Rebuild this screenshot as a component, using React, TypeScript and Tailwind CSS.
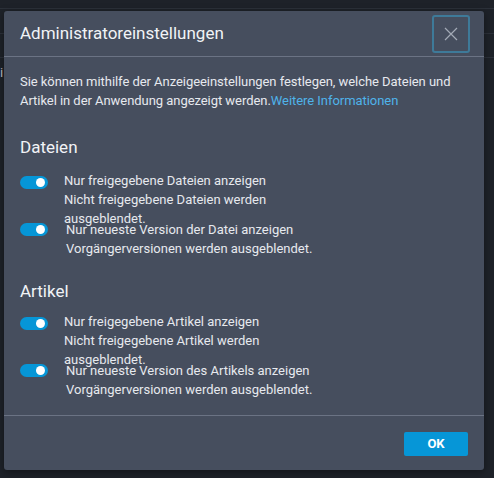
import React from 'react';

const font = { fontFamily: 'Roboto, "Liberation Sans", sans-serif' };

function Toggle() {
  return (
    <span className="relative mt-[5px] inline-flex h-[13px] w-[28px] shrink-0 items-center rounded-full bg-[#0696d7]">
      <span className="absolute right-[3px] h-[9px] w-[9px] rounded-full bg-white" />
    </span>
  );
}

function OptionRow({ label, hint, shift }: { label: string; hint: string; shift?: boolean }) {
  return (
    <div className="flex h-[47px] items-start gap-[16px]">
      <Toggle />
      <div className={`w-[252px] text-[13px] leading-[19px] text-[#e6e9ee] ${shift ? 'ml-[2px] mt-[2px]' : ''}`}>
        <div className="whitespace-nowrap">{label}</div>
        <div>{hint}</div>
      </div>
    </div>
  );
}

export default function App() {
  return (
    <div className="relative h-[478px] w-[494px] overflow-hidden bg-[#1e2229]" style={font}>
      {/* page behind the modal */}
      <div className="flex flex-col">
        <div className="h-[9px] border-b border-[#2c313a] text-[13px] leading-[4px] text-[#b8bec8]">
          <span className="relative left-[-12px] top-[-6px]">Filter Files</span>
        </div>
        <div className="h-[25px] border-b border-[#2c313a]" />
        <div className="h-[24px] border-b border-[#2c313a]" />
        <div className="h-[24px] text-[13px] leading-[30px] text-[#b8bec8]">i</div>
      </div>

      {/* modal */}
      <div className="absolute left-[4px] top-[11px] flex h-[459px] w-[480px] flex-col rounded-[3px] bg-[#464e5e] shadow-[0_2px_8px_rgba(0,0,0,0.4)]">
        <div className="flex h-[46px] shrink-0 items-center justify-between border-b border-[#6b7384] pl-[16px] pr-[14px]">
          <h1 className="text-[17px] text-[#f1f3f6]">Administratoreinstellungen</h1>
          <button className="mt-[4px] flex h-[38px] w-[38px] items-center justify-center self-start rounded-[3px] border-2 border-[#3e7a99]">
            <svg width="14" height="14" viewBox="0 0 14 14" fill="none" stroke="#a3aab6" strokeWidth="1.2">
              <path d="M1 1 L13 13 M13 1 L1 13" />
            </svg>
          </button>
        </div>

        <div className="flex-1 px-[16px] pt-[15px]">
          <p className="text-[13px] leading-[19px] tracking-[-0.05px] text-[#e6e9ee]">
            Sie können mithilfe der Anzeigeeinstellungen festlegen, welche Dateien und Artikel in der Anwendung angezeigt werden.
            <span className="text-[#4fb3ea]">Weitere Informationen</span>
          </p>

          <h2 className="mt-[25px] text-[17px] leading-[24px] text-[#f1f3f6]">Dateien</h2>
          <div className="mt-[12px] flex flex-col">
            <OptionRow label="Nur freigegebene Dateien anzeigen" hint="Nicht freigegebene Dateien werden ausgeblendet." />
            <OptionRow label="Nur neueste Version der Datei anzeigen" hint="Vorgängerversionen werden ausgeblendet." shift />
          </div>

          <h2 className="mt-[14px] text-[17px] leading-[24px] text-[#f1f3f6]">Artikel</h2>
          <div className="mt-[9px] flex flex-col">
            <OptionRow label="Nur freigegebene Artikel anzeigen" hint="Nicht freigegebene Artikel werden ausgeblendet." />
            <OptionRow label="Nur neueste Version des Artikels anzeigen" hint="Vorgängerversionen werden ausgeblendet." shift />
          </div>
        </div>

        <div className="flex h-[55px] shrink-0 items-start justify-end border-t border-[#6b7384] pr-[16px] pt-[16px]">
          <button className="h-[24px] w-[64px] rounded-[2px] bg-[#0696d7] text-[13px] font-bold text-white">OK</button>
        </div>
      </div>
    </div>
  );
}
